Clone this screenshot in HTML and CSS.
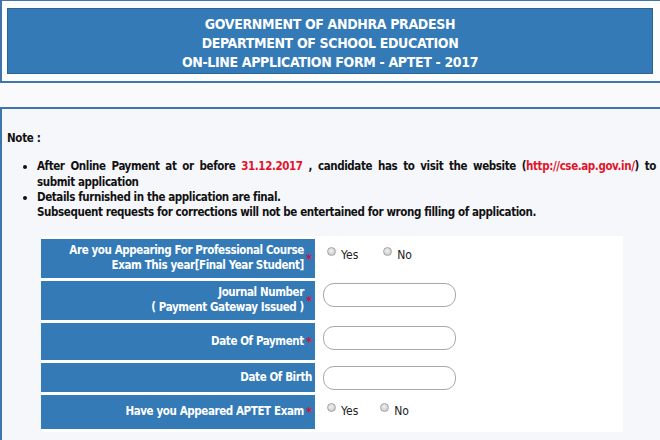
FILE: index.html
```html
<!DOCTYPE html>
<html lang="en">
<head>
<meta charset="utf-8">
<title>APTET 2017 - Online Application</title>
<link rel="stylesheet" href="styles.css">
</head>
<body>
<div class="page">
  <header class="hdr-box">
    <div class="hdr-banner">
      <div>GOVERNMENT OF ANDHRA PRADESH</div>
      <div>DEPARTMENT OF SCHOOL EDUCATION</div>
      <div>ON-LINE APPLICATION FORM - APTET - 2017</div>
    </div>
  </header>

  <main class="main-box">
    <div class="note-title">Note :</div>
    <ul class="note-list">
      <li><span class="jline">After Online Payment at or before <span class="red">31.12.2017</span> , candidate has to visit the website (<span class="red">http://cse.ap.gov.in/</span>) to</span>submit application</li>
      <li>Details furnished in the application are final.<br>Subsequent requests for corrections will not be entertained for wrong filling of application.</li>
    </ul>

    <div class="form">
      <div class="row r1">
        <div class="lbl">Are you Appearing For Professional Course<br>Exam This year[Final Year Student] <span class="req">*</span></div>
        <div class="val radios">
          <label class="opt"><input type="radio" name="prof"> Yes</label>
          <label class="opt"><input type="radio" name="prof"> No</label>
        </div>
      </div>
      <div class="row r2">
        <div class="lbl">Journal Number<br>( Payment Gateway Issued ) <span class="req">*</span></div>
        <div class="val"><input class="txt" type="text"></div>
      </div>
      <div class="row r3">
        <div class="lbl">Date Of Payment <span class="req">*</span></div>
        <div class="val"><input class="txt" type="text"></div>
      </div>
      <div class="row r4">
        <div class="lbl">Date Of Birth</div>
        <div class="val val-dob"><input class="txt" type="text"></div>
      </div>
      <div class="row r5">
        <div class="lbl">Have you Appeared APTET Exam <span class="req">*</span></div>
        <div class="val radios tight">
          <label class="opt"><input type="radio" name="app"> Yes</label>
          <label class="opt"><input type="radio" name="app"> No</label>
        </div>
      </div>
    </div>
  </main>
</div>
</body>
</html>
```

FILE: styles.css
```css
html, body {
  margin: 0;
  padding: 0;
}
body {
  background: #faf9fb;
  font-family: "DejaVu Sans Condensed", "DejaVu Sans", sans-serif;
  font-stretch: condensed;
  color: #111;
  overflow: hidden;
  width: 660px;
  height: 440px;
}
.page {
  width: 660px;
  overflow: hidden;
}

.hdr-box {
  width: 700px;
  background: #fdfdfe;
  border: 2px solid #3d76ad;
  border-top-width: 1px;
  padding: 7px 0 7px 5px;
}
.hdr-banner {
  width: 644px;
  background: #337ab7;
  border: 1px solid #2a6598;
  color: #fff;
  font-weight: bold;
  font-size: 14px;
  letter-spacing: -0.35px;
  line-height: 19px;
  text-align: center;
  padding: 6px 0 1px;
}

.main-box {
  display: block;
  margin-top: 24px;
  width: 649px;
  height: 324px;
  background: #f6f7fb;
  border: 2px solid #3d76ad;
  padding: 22px 50px 4px 5px;
}
.note-title {
  font-weight: bold;
  font-size: 11.5px;
  letter-spacing: -0.3px;
  line-height: 15.33px;
}
.note-list {
  margin: 13px 0 0;
  padding: 0 0 0 30px;
  font-weight: bold;
  font-size: 11.5px;
  letter-spacing: -0.4px;
  line-height: 15.33px;
}
.jline {
  display: block;
  text-align: justify;
  text-align-last: justify;
}
.red {
  color: #e3142a;
}

.form {
  margin: 15px 0 0 34px;
  width: 582px;
  background: #fff;
  padding: 3px 0 3px;
  display: flex;
  flex-direction: column;
  gap: 3px;
}
.row {
  display: flex;
  gap: 3px;
}
.r1, .r2 { height: 39px; }
.r3 { height: 37px; }
.r4 { height: 29px; }
.r5 { height: 34px; }

.lbl {
  width: 271px;
  flex: none;
  background: #337ab7;
  color: #fff;
  font-weight: bold;
  font-size: 11.5px;
  letter-spacing: -0.4px;
  line-height: 15px;
  text-align: right;
  padding-right: 3px;
  display: flex;
  align-items: center;
  justify-content: flex-end;
}
.req {
  color: #d4123e;
  font-size: 13px;
  letter-spacing: 0;
  margin-left: 2px;
}
.val {
  flex: 1;
  padding: 2px 5px 0;
  display: flex;
  align-items: flex-start;
}
.r3 .val, .val-dob { padding-top: 3px; }
.txt {
  box-sizing: border-box;
  width: 133px;
  height: 24px;
  margin: 0;
  border: 1px solid #a8a8a8;
  border-radius: 11px;
  background: #fff;
  outline: none;
}
.radios {
  padding-top: 0;
  font-family: "Liberation Sans Narrow", "DejaVu Sans Condensed", sans-serif;
  font-weight: normal;
  font-size: 12px;
  color: #222;
}
.opt {
  display: flex;
  align-items: flex-start;
  margin-right: 21px;
  padding-top: 10px;
  line-height: 13px;
}
.tight .opt { margin-right: 18px; }
.opt input {
  appearance: none;
  -webkit-appearance: none;
  width: 9px;
  height: 9px;
  margin: -2px 5px 0 4px;
  border: 1px solid #a5a5a5;
  border-radius: 50%;
  background: radial-gradient(circle at 45% 40%, #f2f2f2 0, #d6d6d6 55%, #bdbdbd 100%);
  box-sizing: border-box;
}
```
